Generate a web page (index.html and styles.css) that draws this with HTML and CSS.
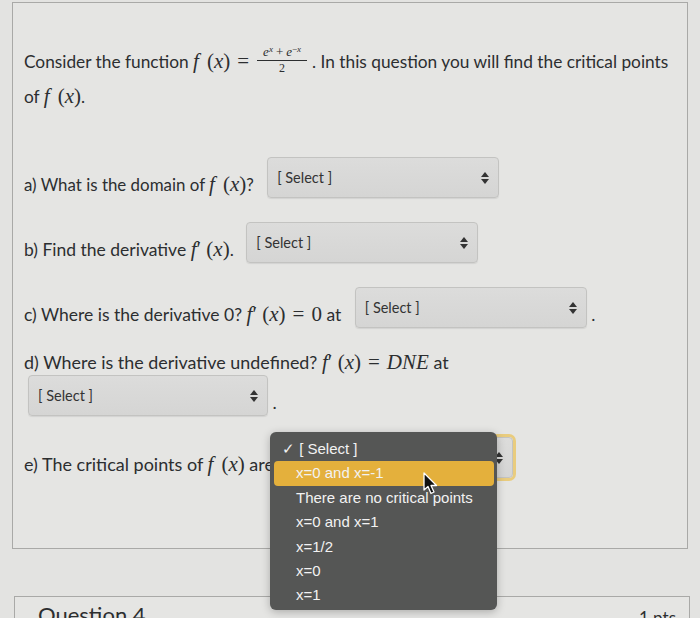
FILE: index.html
```
<!DOCTYPE html>
<html lang="en">
<head>
    <meta charset="UTF-8">
    <meta name="viewport" content="width=device-width, initial-scale=1.0">
    <title>Question 3</title>
    <link rel="stylesheet" href="styles.css">
</head>
<body>
    <div class="question">
        <p class="prompt">
            Consider the function <span class="math"><i class="fn">f</i>(<i>x</i>)<span class="rel">=</span><span class="frac"><span class="num"><i>e</i><sup><i>x</i></sup><span class="bin">+</span><i>e</i><sup>&minus;<i>x</i></sup></span><span class="den">2</span></span></span>. In this question you will find the critical points
            <span class="nowrap">of <span class="math"><i class="fn">f</i>(<i>x</i>)</span>.</span>
        </p>

        <div class="part part-a">
            a) What is the domain of <span class="math"><i class="fn">f</i>(<i>x</i>)</span>? <span class="select"><span class="sel-text">[ Select ]</span><span class="arrows"></span></span>
        </div>

        <div class="part part-b">
            b) Find the derivative <span class="math"><i>f</i>&prime; (<i>x</i>)</span>. <span class="select"><span class="sel-text">[ Select ]</span><span class="arrows"></span></span>
        </div>

        <div class="part part-c">
            c) Where is the derivative 0? <span class="math"><i>f</i>&prime; (<i>x</i>)<span class="rel">=</span>0</span> at <span class="select"><span class="sel-text">[ Select ]</span><span class="arrows"></span></span> .
        </div>

        <div class="part part-d">
            d) Where is the derivative undefined? <span class="math"><i>f</i>&prime; (<i>x</i>)<span class="rel">=</span><i>DNE</i></span> at<br>
            <span class="select sel-d"><span class="sel-text">[ Select ]</span><span class="arrows"></span></span> .
        </div>

        <div class="part part-e">
            e) The critical points of <span class="math"><i class="fn">f</i>(<i>x</i>)</span> are <span class="select focused"><span class="sel-text">[ Select ]</span><span class="arrows"></span></span>

            <ul class="menu">
                <li class="checked">&#10003; [ Select ]</li>
                <li class="hover">x=0 and x=-1</li>
                <li>There are no critical points</li>
                <li>x=0 and x=1</li>
                <li>x=1/2</li>
                <li>x=0</li>
                <li>x=1</li>
            </ul>

            <svg class="cursor" width="16" height="24" viewBox="0 0 16 24">
                <path d="M1 1 L1 18 L5 14.5 L8 21.5 L11 20 L8 13.5 L13.5 13.5 Z" fill="#111" stroke="#fff" stroke-width="1.3" stroke-linejoin="round"/>
            </svg>
        </div>
    </div>

    <div class="question next">
        <div class="q-header">
            <span class="q-title">Question 4</span>
            <span class="q-pts">1 pts</span>
        </div>
    </div>
</body>
</html>
```

FILE: styles.css
```
body {
    margin: 0;
    background: #e3e3e1;
    font-family: Lato, "Liberation Sans", sans-serif;
    color: #2c2e30;
    height: 618px;
    overflow: hidden;
}

.question {
    margin: 2px 12px 0 12px;
    border: 1px solid #a9a9a7;
    background: #e5e5e3;
    height: 547px;
    padding: 0 11px;
    box-sizing: border-box;
}

.prompt {
    margin: 0;
    padding-top: 41px;
    font-size: 17.3px;
    line-height: 34px;
}

.nowrap {
    white-space: nowrap;
}

.math {
    font-family: "Liberation Serif", "DejaVu Serif", serif;
    font-size: 21px;
    white-space: nowrap;
}

.math i {
    font-style: italic;
}

.math .fn {
    margin-right: 8px;
}

.rel {
    margin: 0 7px;
}

.frac {
    display: inline-flex;
    flex-direction: column;
    align-items: center;
    vertical-align: 12px;
    margin: 0 5px 0 1px;
    line-height: 1;
}

.num {
    font-size: 13px;
    padding: 0 6px 2px;
    border-bottom: 1px solid #2c2e30;
}

.num sup {
    font-size: 9px;
    vertical-align: 4px;
}

.bin {
    margin: 0 3px;
}

.den {
    font-size: 12px;
    padding-top: 1px;
}

.part {
    font-size: 17.2px;
    line-height: 24px;
    margin-top: 24px;
}

.prompt + .part {
    margin-top: 43px;
}

.part-a {
    font-size: 16.9px;
}

.part-b {
    font-size: 17.5px;
}

.part-c {
    font-size: 17.5px;
}

.part-d {
    font-size: 17.9px;
    margin-top: 22px;
}

.part-e {
    position: relative;
    font-size: 18px;
    margin-top: 21px;
}

.select {
    display: inline-block;
    position: relative;
    overflow: hidden;
    width: 232px;
    height: 41px;
    box-sizing: border-box;
    border: 1px solid #c3c3c1;
    border-radius: 4px;
    background: linear-gradient(#dcdcdb, #d5d5d4);
    box-shadow: 0 1px 1px rgba(0, 0, 0, 0.08);
    vertical-align: -7px;
    margin-left: 9px;
}

.part-b .select {
    margin-left: 8px;
}

.sel-text {
    position: absolute;
    left: 9px;
    top: 12px;
    font-size: 14.5px;
    line-height: 16px;
    color: #333;
}

.arrows {
    position: absolute;
    right: 9px;
    top: 14px;
    width: 0;
    height: 0;
    border-left: 4px solid transparent;
    border-right: 4px solid transparent;
    border-bottom: 5px solid #333;
}

.arrows::after {
    content: "";
    position: absolute;
    left: -4px;
    top: 7px;
    border-left: 4px solid transparent;
    border-right: 4px solid transparent;
    border-top: 5px solid #333;
}

.sel-d {
    margin: 1px 0 0 4px;
    width: 240px;
}

.part-e .focused {
    box-shadow: 0 0 0 3px #e9cc7e;
    margin-left: 2px;
}

.menu {
    position: absolute;
    left: 246px;
    top: -5px;
    width: 227px;
    margin: 0;
    padding: 5px 3px 2px 4px;
    box-sizing: border-box;
    list-style: none;
    background: #555655;
    border-radius: 6px;
    box-shadow: 0 2px 8px rgba(0, 0, 0, 0.25);
    font-family: "Liberation Sans", Arial, sans-serif;
    font-size: 15px;
    color: #f2f2f2;
}

.menu li {
    height: 24.4px;
    line-height: 24px;
    padding-left: 22px;
    border-radius: 4px;
    white-space: nowrap;
}

.menu .checked {
    padding-left: 8px;
}

.menu .hover {
    background: #e4b03c;
}

.cursor {
    position: absolute;
    left: 399px;
    top: 35px;
}

.next {
    margin-top: 47px;
    height: 40px;
    margin-left: 14px;
    margin-right: 10px;
}

.q-header {
    display: flex;
    justify-content: space-between;
    padding: 4px 2px 0 12px;
}

.q-title {
    font-size: 22px;
}

.q-pts {
    font-size: 17px;
    padding-top: 6px;
}
```
